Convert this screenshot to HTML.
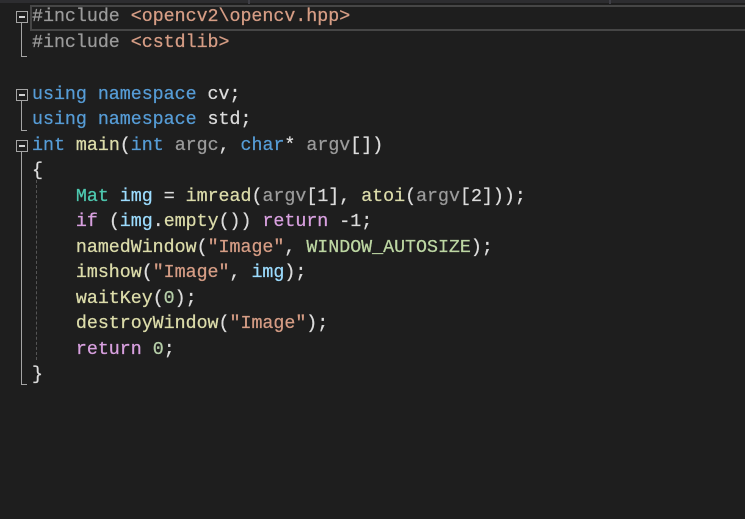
<!DOCTYPE html>
<html><head><style>
body{margin:0;width:745px;height:519px;background:#1e1e1e;overflow:hidden;position:relative;font-family:"Liberation Mono",monospace;font-size:18.3px;}
.top{position:absolute;left:0;top:0;width:745px;height:3px;background:#2d2d30;}
.sep{position:absolute;top:0;height:4px;width:2px;background:#3f3f46;}
.hl{position:absolute;left:30px;top:5px;width:720px;height:22px;border:2px solid #464646;}
.l{position:absolute;left:32px;white-space:pre;color:#dcdcdc;line-height:25px;-webkit-text-stroke:0.25px currentColor;}
.fold{position:absolute;left:16px;width:10px;height:10px;border:1px solid #a5a5a5;}
.fold:after{content:"";position:absolute;left:2px;top:4px;width:6px;height:2px;background:#d0d0d0;}
.vl{position:absolute;left:21px;width:1px;background:#a5a5a5;}
.hz{position:absolute;left:21px;width:6px;height:1px;background:#a5a5a5;}
.dl{position:absolute;left:36px;width:0;border-left:1px dashed #555;}
.k{color:#569cd6}.p{color:#9b9b9b}.s{color:#d69d85}.f{color:#dcdcaa}.v{color:#9cdcfe}.t{color:#4ec9b0}.m{color:#bdd7a3}.c{color:#d8a0df}.n{color:#b5cea8}
</style></head><body>
<div class="top"></div><div class="sep" style="left:248px"></div><div class="sep" style="left:609px"></div>
<div class="hl"></div>
<div class="fold" style="top:11px"></div><div class="vl" style="top:23px;height:33px"></div><div class="hz" style="top:56px"></div>
<div class="fold" style="top:89px"></div><div class="vl" style="top:101px;height:29px"></div><div class="hz" style="top:130px"></div>
<div class="fold" style="top:140px"></div><div class="vl" style="top:152px;height:232px"></div><div class="hz" style="top:384px"></div>
<div class="dl" style="top:180px;height:180px"></div>
<div class="l" style="top:5px"><span class="p">#include</span> <span class="s">&lt;opencv2\opencv.hpp&gt;</span></div>
<div class="l" style="top:31px"><span class="p">#include</span> <span class="s">&lt;cstdlib&gt;</span></div>
<div class="l" style="top:83px"><span class="k">using namespace</span> cv;</div>
<div class="l" style="top:108px"><span class="k">using namespace</span> std;</div>
<div class="l" style="top:134px"><span class="k">int</span> <span class="f">main</span>(<span class="k">int</span> <span class="p">argc</span>, <span class="k">char</span>* <span class="p">argv</span>[])</div>
<div class="l" style="top:159px">{</div>
<div class="l" style="top:185px">    <span class="t">Mat</span> <span class="v">img</span> = <span class="f">imread</span>(<span class="p">argv</span>[1], <span class="f">atoi</span>(<span class="p">argv</span>[2]));</div>
<div class="l" style="top:210px">    <span class="c">if</span> (<span class="v">img</span>.<span class="f">empty</span>()) <span class="c">return</span> -1;</div>
<div class="l" style="top:236px">    <span class="f">namedWindow</span>(<span class="s">"Image"</span>, <span class="m">WINDOW_AUTOSIZE</span>);</div>
<div class="l" style="top:261px">    <span class="f">imshow</span>(<span class="s">"Image"</span>, <span class="v">img</span>);</div>
<div class="l" style="top:287px">    <span class="f">waitKey</span>(<span class="n">0</span>);</div>
<div class="l" style="top:312px">    <span class="f">destroyWindow</span>(<span class="s">"Image"</span>);</div>
<div class="l" style="top:338px">    <span class="c">return</span> <span class="n">0</span>;</div>
<div class="l" style="top:363px">}</div>
</body></html>
